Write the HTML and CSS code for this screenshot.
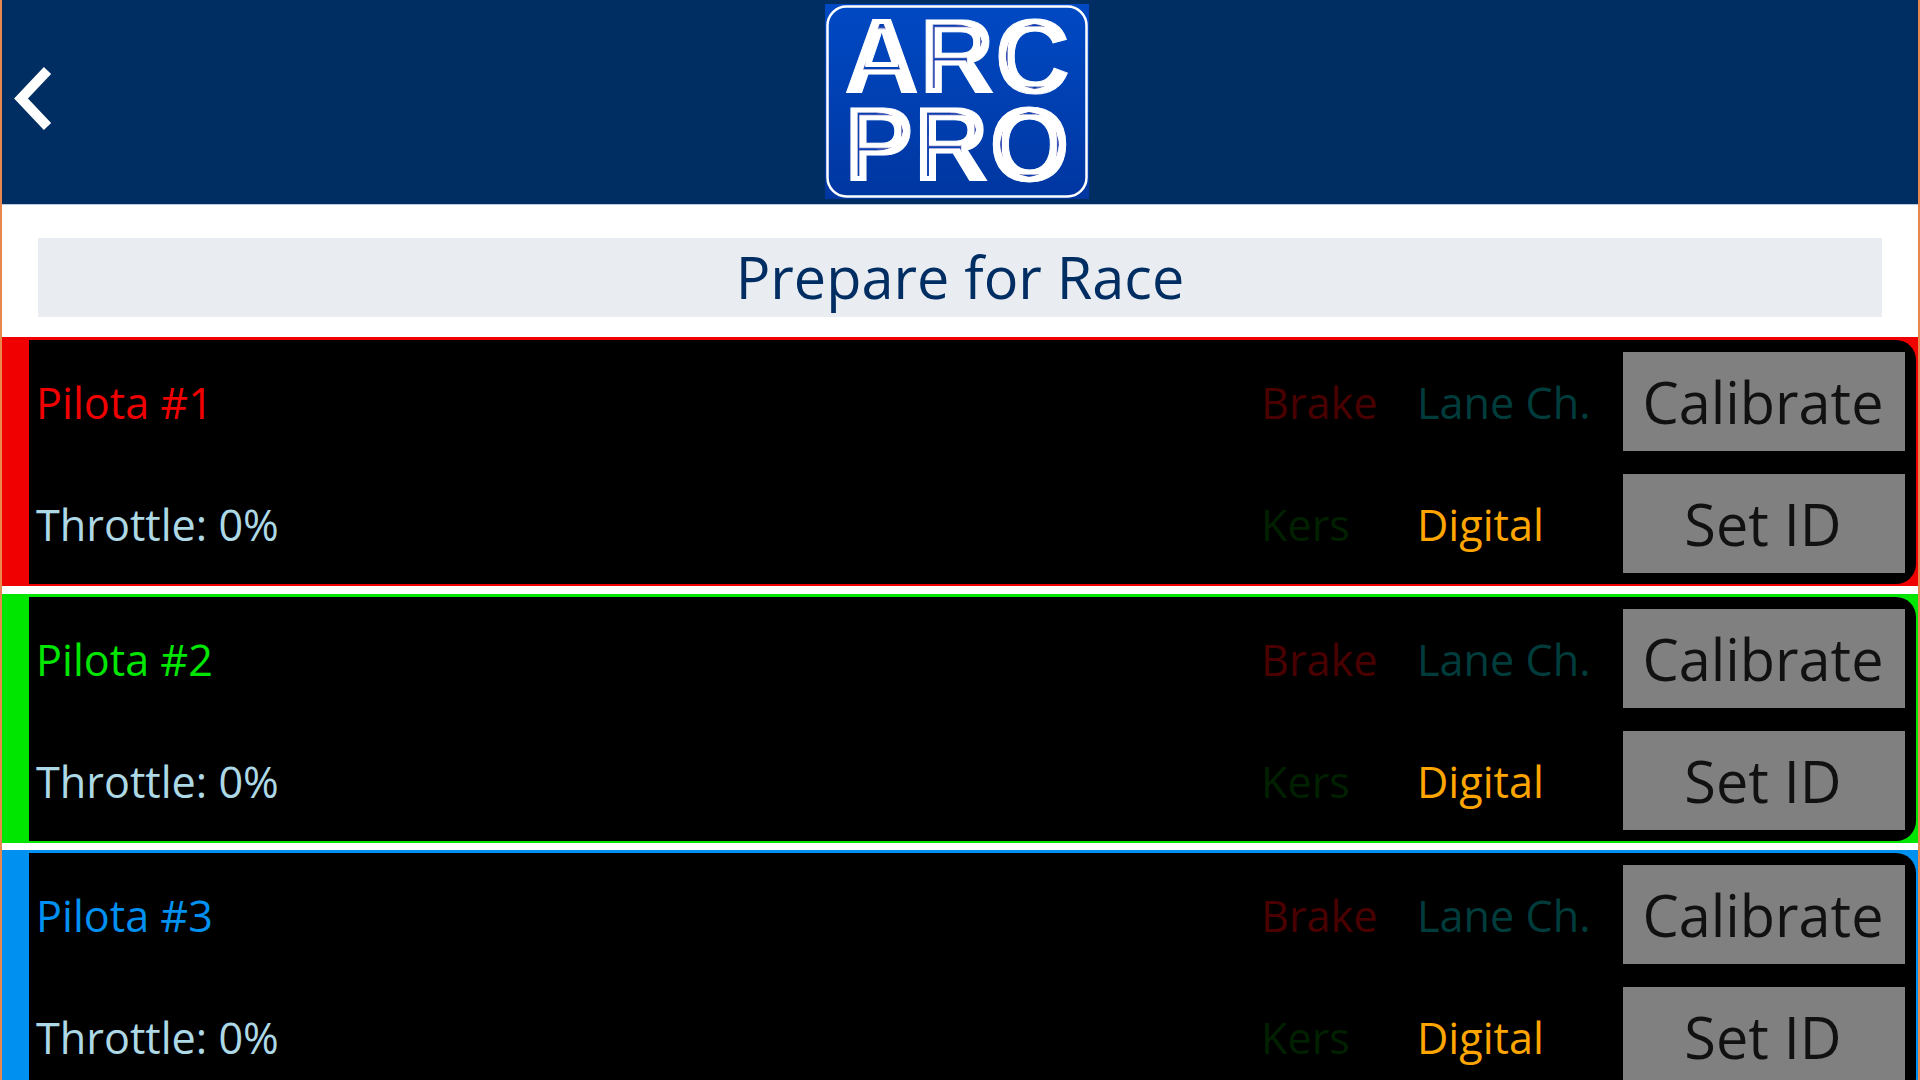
FILE: index.html
```html
<!DOCTYPE html>
<html lang="en">
<head>
    <meta charset="UTF-8">
    <title>Prepare for Race</title>
    <link rel="stylesheet" href="styles.css">
</head>
<body>
    <!-- Header -->
    <header class="top-bar">
        <svg class="back-icon" viewBox="0 0 60 80" width="60" height="80">
            <polyline points="45.5,12.5 19,40.5 45.5,68.5" fill="none" stroke="#ffffff" stroke-width="10"/>
        </svg>
        <svg class="logo" viewBox="0 0 264 195" width="264" height="195">
            <defs>
                <linearGradient id="logoBg" x1="0" y1="0" x2="0" y2="1">
                    <stop offset="0" stop-color="#0049c4"/>
                    <stop offset="1" stop-color="#0036a0"/>
                </linearGradient>
                <!-- thin blue line running down the middle of the white letters -->
                <filter id="inline" x="-5%" y="-5%" width="110%" height="110%">
                    <feMorphology in="SourceAlpha" operator="erode" radius="6.6 5.2" result="core"/>
                    <feFlood flood-color="#0040b4"/>
                    <feComposite in2="core" operator="in" result="line"/>
                    <feMerge>
                        <feMergeNode in="SourceGraphic"/>
                        <feMergeNode in="line"/>
                    </feMerge>
                </filter>
            </defs>
            <rect width="264" height="195" fill="url(#logoBg)"/>
            <rect x="2.5" y="2.5" width="259" height="190" rx="19" fill="none" stroke="#ffffff" stroke-width="2.5"/>
            <text class="logo-text" x="132" y="89" textLength="226" lengthAdjust="spacingAndGlyphs">ARC</text>
            <text class="logo-text" x="132" y="177" textLength="226" lengthAdjust="spacingAndGlyphs">PRO</text>
        </svg>
    </header>

    <!-- Title -->
    <div class="title-wrap">
        <h1 class="page-title">Prepare for Race</h1>
    </div>

    <!-- Pilots -->
    <div class="pilot-list">
        <div class="pilot pilot-red">
            <div class="pilot-inner">
                <div class="pilot-text pilot-name">Pilota #1</div>
                <div class="pilot-text flag-brake">Brake</div>
                <div class="pilot-text flag-lane">Lane Ch.</div>
                <button class="pilot-btn">Calibrate</button>
                <div class="pilot-text throttle">Throttle: 0%</div>
                <div class="pilot-text flag-kers">Kers</div>
                <div class="pilot-text flag-digital">Digital</div>
                <button class="pilot-btn">Set ID</button>
            </div>
        </div>
        <div class="pilot pilot-green">
            <div class="pilot-inner">
                <div class="pilot-text pilot-name">Pilota #2</div>
                <div class="pilot-text flag-brake">Brake</div>
                <div class="pilot-text flag-lane">Lane Ch.</div>
                <button class="pilot-btn">Calibrate</button>
                <div class="pilot-text throttle">Throttle: 0%</div>
                <div class="pilot-text flag-kers">Kers</div>
                <div class="pilot-text flag-digital">Digital</div>
                <button class="pilot-btn">Set ID</button>
            </div>
        </div>
        <div class="pilot pilot-blue">
            <div class="pilot-inner">
                <div class="pilot-text pilot-name">Pilota #3</div>
                <div class="pilot-text flag-brake">Brake</div>
                <div class="pilot-text flag-lane">Lane Ch.</div>
                <button class="pilot-btn">Calibrate</button>
                <div class="pilot-text throttle">Throttle: 0%</div>
                <div class="pilot-text flag-kers">Kers</div>
                <div class="pilot-text flag-digital">Digital</div>
                <button class="pilot-btn">Set ID</button>
            </div>
        </div>
    </div>
</body>
</html>
```

FILE: styles.css
```css
* {
    margin: 0;
    padding: 0;
    box-sizing: border-box;
}

html, body {
    height: 1080px;
    overflow: hidden;
}

body {
    font-family: 'Open Sans', 'Noto Sans', sans-serif;
    background: #ffffff;
    border-left: 2px solid #e8884f;
    border-right: 2px solid #e8884f;
}

/* Header */
.top-bar {
    height: 205px;
    background: #002d62;
    border-bottom: 1px solid #b9c9df;
    display: grid;
    grid-template-columns: 823px 264px 1fr;
    align-items: start;
}

.back-icon {
    margin-top: 58px;
}

.logo {
    grid-column: 2;
    margin-top: 4px;
    display: block;
    overflow: visible;
}

.logo-text {
    font-family: 'Liberation Sans', sans-serif;
    font-size: 106px;
    font-weight: 700;
    text-anchor: middle;
    fill: #ffffff;
    stroke: #ffffff;
    stroke-width: 1px;
    filter: url(#inline);
}

/* Title */
.title-wrap {
    padding: 33px 36px 20px;
}

.page-title {
    height: 79px;
    background: #e9ecf1;
    color: #002d62;
    font-size: 57.6px;
    font-weight: 400;
    line-height: 77px;
    text-align: center;
}

/* Pilot cards */
.pilot-list {
    display: flex;
    flex-direction: column;
    gap: 7.5px;
}

.pilot {
    padding: 3px 2px 2px 27px;
}

.pilot-red { background: #f00000; }
.pilot-green { background: #00e600; }
.pilot-blue { background: #0090f0; }

.pilot-red .pilot-name { color: #f00000; }
.pilot-green .pilot-name { color: #00e600; }
.pilot-blue .pilot-name { color: #0090f0; }

.pilot-inner {
    background: #000000;
    border-radius: 0 20px 20px 0;
    height: 244px;
    padding: 12px 11px 11px 7px;
    display: grid;
    grid-template-columns: 1fr 156px 206px 282px;
    grid-template-rows: 99px 99px;
    row-gap: 23px;
    align-items: center;
    font-size: 43.2px;
}

.pilot-text {
    padding-top: 2px;
}

.throttle { color: #add8e6; }
.flag-brake { color: #4a0000; }
.flag-lane { color: #003c3c; }
.flag-kers { color: #002000; }
.flag-digital { color: #ffa500; }

.pilot-btn {
    height: 99px;
    padding-right: 2px;
    background: #808080;
    border: none;
    color: #111111;
    font-family: inherit;
    font-size: 57.6px;
}
```
